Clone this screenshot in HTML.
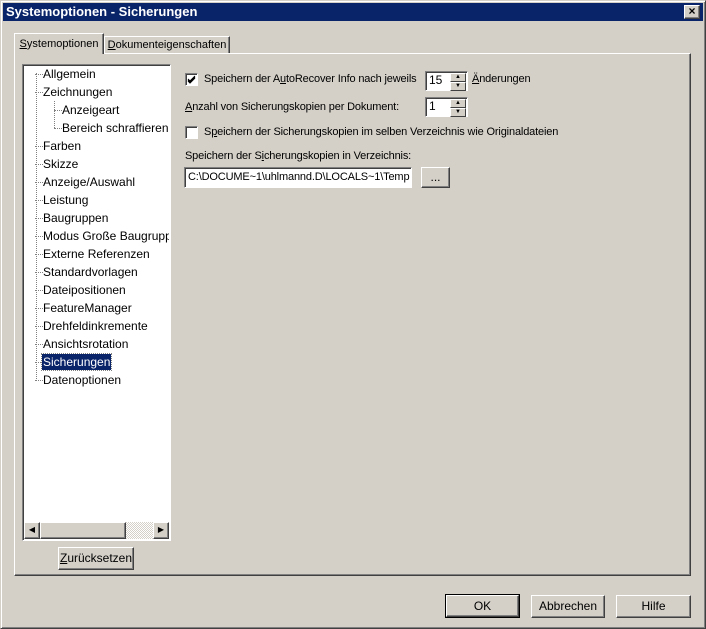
<!DOCTYPE html>
<html><head><meta charset="utf-8"><style>
*{box-sizing:border-box;margin:0;padding:0}
body{width:706px;height:629px;overflow:hidden;background:#d4d0c8;font-family:"Liberation Sans",sans-serif;font-size:11px;color:#000;position:relative}
.a{position:absolute}
.win{left:0;top:0;width:706px;height:629px;border:1px solid;border-color:#d4d0c8 #404040 #404040 #d4d0c8;box-shadow:inset 1px 1px 0 #fff,inset -1px -1px 0 #808080}
.title{left:3px;top:3px;width:700px;height:18px;background:#0a246a;color:#fff;font-weight:bold;font-size:13px;line-height:18px;padding-left:3px}
.close{left:684px;top:5px;width:16px;height:14px;background:#d4d0c8;border:1px solid;border-color:#fff #404040 #404040 #fff;box-shadow:inset -1px -1px 0 #808080;font-size:12px;line-height:11px;text-align:center;font-weight:bold;color:#000}
.raised{border:1px solid;border-color:#fff #404040 #404040 #fff;box-shadow:inset -1px -1px 0 #808080}
.sunk{border:1px solid;border-color:#808080 #fff #fff #808080;box-shadow:inset 1px 1px 0 #404040}
.btn{text-align:center;line-height:20px;font-size:12px}
.panel{left:14px;top:53px;width:677px;height:523px;border:1px solid;border-color:#fff #404040 #404040 #fff;box-shadow:inset -1px -1px 0 #808080}
.tab{border:1px solid;border-bottom:none;border-color:#fff #404040 #404040 #fff;box-shadow:inset -1px 0 0 #808080;background:#d4d0c8;text-align:center;font-size:11px}
.tree{left:22px;top:64px;width:149px;height:477px;background:#fff}
.it{position:absolute;font-size:12px;line-height:16px;white-space:nowrap}
.dl{position:absolute;border-top:1px dotted #808080;width:8px}
.dv{position:absolute;border-left:1px dotted #808080}
.cb{width:13px;height:13px;background:#fff}
u{text-decoration:underline}
.spin{background:#fff}
.sb{position:absolute;width:16px;height:9px;background:#d4d0c8;border:1px solid;border-color:#fff #404040 #404040 #fff;font-size:6px;line-height:6px;text-align:center}
.t{letter-spacing:-0.15px}
</style></head><body>
<div class="a win"></div>
<div class="a title">Systemoptionen - Sicherungen</div>
<div class="a close">×</div>

<div class="a panel"></div>
<div class="a tab" style="left:104px;top:36px;width:126px;height:17px;line-height:16px"><u>D</u>okumenteigenschaften</div>
<div class="a tab" style="left:14px;top:33px;width:90px;height:21px;line-height:20px;z-index:2"><u>S</u>ystemoptionen</div>

<div class="a tree sunk">
 <div class="dv" style="left:13px;top:8px;height:308px"></div>
 <div class="dv" style="left:31px;top:36px;height:27px"></div>
</div>
<div class="a" style="left:23px;top:65px">
<div class="dl" style="left:12px;top:9px"></div><div class="it" style="left:20px;top:1px">Allgemein</div>
<div class="dl" style="left:12px;top:27px"></div><div class="it" style="left:20px;top:19px">Zeichnungen</div>
<div class="dl" style="left:31px;top:45px"></div><div class="it" style="left:39px;top:37px">Anzeigeart</div>
<div class="dl" style="left:31px;top:63px"></div><div class="it" style="left:39px;top:55px;width:106px;overflow:hidden">Bereich schraffieren</div>
<div class="dl" style="left:12px;top:81px"></div><div class="it" style="left:20px;top:73px">Farben</div>
<div class="dl" style="left:12px;top:99px"></div><div class="it" style="left:20px;top:91px">Skizze</div>
<div class="dl" style="left:12px;top:117px"></div><div class="it" style="left:20px;top:109px">Anzeige/Auswahl</div>
<div class="dl" style="left:12px;top:135px"></div><div class="it" style="left:20px;top:127px">Leistung</div>
<div class="dl" style="left:12px;top:153px"></div><div class="it" style="left:20px;top:145px">Baugruppen</div>
<div class="dl" style="left:12px;top:171px"></div><div class="it" style="left:20px;top:163px;width:126px;overflow:hidden">Modus Große Baugruppe</div>
<div class="dl" style="left:12px;top:189px"></div><div class="it" style="left:20px;top:181px">Externe Referenzen</div>
<div class="dl" style="left:12px;top:207px"></div><div class="it" style="left:20px;top:199px">Standardvorlagen</div>
<div class="dl" style="left:12px;top:225px"></div><div class="it" style="left:20px;top:217px">Dateipositionen</div>
<div class="dl" style="left:12px;top:243px"></div><div class="it" style="left:20px;top:235px">FeatureManager</div>
<div class="dl" style="left:12px;top:261px"></div><div class="it" style="left:20px;top:253px">Drehfeldinkremente</div>
<div class="dl" style="left:12px;top:279px"></div><div class="it" style="left:20px;top:271px">Ansichtsrotation</div>
<div class="dl" style="left:12px;top:297px"></div><div class="it" style="left:19px;top:289px;background:#0a246a;color:#fff;padding:0 1px;outline:1px dotted #808080">Sicherungen</div>
<div class="dl" style="left:12px;top:315px"></div><div class="it" style="left:20px;top:307px">Datenoptionen</div>
</div>
<!-- scrollbar -->
<div class="a" style="left:24px;top:522px;width:145px;height:17px;background:repeating-conic-gradient(#fff 0 25%,#d4d0c8 0 50%) 0 0/2px 2px"></div>
<div class="a raised" style="left:24px;top:522px;width:16px;height:17px;background:#d4d0c8;font-size:8px;line-height:14px;text-align:center">◀</div>
<div class="a raised" style="left:40px;top:522px;width:86px;height:17px;background:#d4d0c8"></div>
<div class="a raised" style="left:153px;top:522px;width:16px;height:17px;background:#d4d0c8;font-size:8px;line-height:14px;text-align:center">▶</div>

<div class="a raised btn" style="left:58px;top:547px;width:76px;height:23px"><u>Z</u>urücksetzen</div>

<!-- right content -->
<div class="a sunk cb" style="left:185px;top:73px"></div>
<svg class="a" style="left:187px;top:75px" width="9" height="9" viewBox="0 0 9 9"><path d="M1 4 L3 6 L8 1 M1 5 L3 7 L8 2 M1 6 L3 8 L8 3" stroke="#000" stroke-width="1" fill="none"/></svg>
<div class="a t" style="left:204px;top:73px">Speichern der A<u>u</u>toRecover Info nach jeweils</div>
<div class="a sunk spin" style="left:425px;top:71px;width:43px;height:20px"></div>
<div class="a" style="left:429px;top:73px;font-size:12px">15</div>
<div class="sb" style="left:450px;top:73px">▲</div><div class="sb" style="left:450px;top:82px">▼</div>
<div class="a t" style="left:472px;top:73px"><u>Ä</u>nderungen</div>

<div class="a t" style="left:185px;top:101px"><u>A</u>nzahl von Sicherungskopien per Dokument:</div>
<div class="a sunk spin" style="left:425px;top:97px;width:43px;height:20px"></div>
<div class="a" style="left:429px;top:99px;font-size:12px">1</div>
<div class="sb" style="left:450px;top:99px">▲</div><div class="sb" style="left:450px;top:108px">▼</div>

<div class="a sunk cb" style="left:185px;top:126px"></div>
<div class="a t" style="left:204px;top:126px">S<u>p</u>eichern der Sicherungskopien im selben Verzeichnis wie Originaldateien</div>

<div class="a t" style="left:185px;top:150px">Speichern der S<u>i</u>cherungskopien in Verzeichnis:</div>
<div class="a sunk t" style="left:184px;top:167px;width:228px;height:21px;background:#fff;overflow:hidden;white-space:nowrap;padding:3px 0 0 3px;font-size:11px">C:\DOCUME~1\uhlmannd.D\LOCALS~1\Temp</div>
<div class="a raised btn" style="left:421px;top:167px;width:29px;height:21px;line-height:18px">...</div>

<div class="a btn" style="left:445px;top:594px;width:75px;height:24px;border:1px solid #000"><div class="raised" style="height:22px;line-height:20px">OK</div></div>
<div class="a raised btn" style="left:531px;top:595px;width:74px;height:23px">Abbrechen</div>
<div class="a raised btn" style="left:616px;top:595px;width:75px;height:23px">Hilfe</div>
</body></html>
